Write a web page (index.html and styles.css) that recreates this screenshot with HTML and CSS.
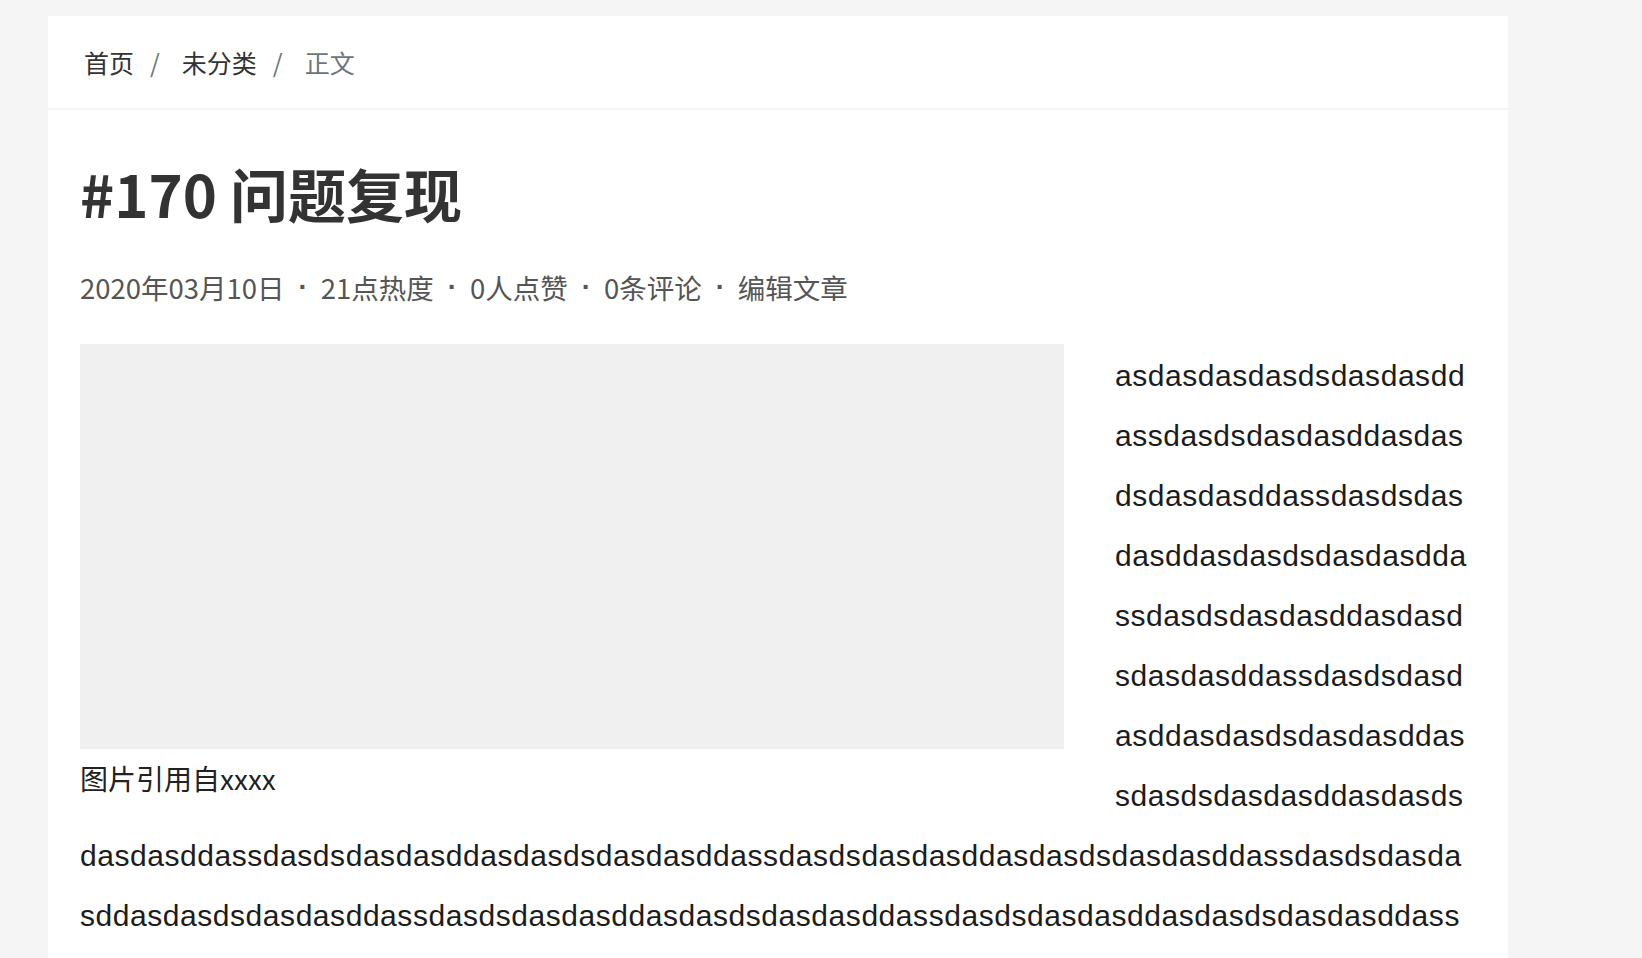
FILE: index.html
```html
<!DOCTYPE html>
<html lang="zh-CN">
<head>
    <meta charset="UTF-8">
    <meta name="viewport" content="width=device-width, initial-scale=1.0">
    <title>#170 问题复现</title>
    <link rel="stylesheet" href="styles.css">
</head>
<body>
    <div class="post-card">
        <nav class="crumbs">
            <a href="#">首页</a><span class="sep">/</span><a href="#">未分类</a><span class="sep">/</span><span class="current">正文</span>
        </nav>

        <article class="post">
            <h1 class="post-title">#170 问题复现</h1>

            <div class="post-meta">
                <span>2020年03月10日</span><span class="dot">·</span><span>21点热度</span><span class="dot">·</span><span>0人点赞</span><span class="dot">·</span><span>0条评论</span><span class="dot">·</span><a href="#">编辑文章</a>
            </div>

            <div class="post-body">
                <figure class="pic">
                    <div class="pic-box"></div>
                    <figcaption>图片引用自xxxx</figcaption>
                </figure>
                <p>asdasdasdasdsdasdasddassdasdsdasdasddasdasdsdasdasddassdasdsdasdasddasdasdsdasdasddassdasdsdasdasddasdasdsdasdasddassdasdsdasdasddasdasdsdasdasddassdasdsdasdasddasdasdsdasdasddassdasdsdasdasddasdasdsdasdasddassdasdsdasdasddasdasdsdasdasddassdasdsdasdasddasdasdsdasdasddassdasdsdasdasddasdasdsdasdasddassdasdsdasdasddasdasdsdasdasddassdasdsdasdasddasdasdsdasdasddass</p>
            </div>
        </article>
    </div>
</body>
</html>
```

FILE: styles.css
```css
body {
    margin: 0;
    padding-top: 16px;
    background: #f5f5f5;
    font-family: "Noto Sans CJK SC", "Liberation Sans", sans-serif;
    color: #333;
}
a {
    color: inherit;
    text-decoration: none;
}
.post-card {
    width: 1460px;
    margin-left: 48px;
    background: #fff;
    min-height: 1000px;
}
.crumbs {
    height: 92px;
    padding: 0 36px;
    display: flex;
    align-items: center;
    font-size: 25px;
    color: #333;
    border-bottom: 2px solid #f5f5f5;
}
.crumbs .sep {
    margin: 0 22px 0 16px;
    color: #6c757d;
}
.crumbs .current {
    color: #6c757d;
}
.post {
    padding: 0 38px 0 32px;
}
.post-title {
    margin: 48px 0 0;
    font-size: 58px;
    line-height: 70px;
    font-weight: 700;
    color: #333;
}
.post-meta {
    display: flex;
    align-items: center;
    height: 40px;
    margin-top: 39px;
    font-size: 27.5px;
    line-height: 40px;
    color: #555;
}
.post-meta .dot {
    margin: 0 13px 0 14px;
    font-family: "Liberation Sans", sans-serif;
    font-weight: 700;
}
.post-body {
    margin-top: 37px;
}
.pic {
    float: left;
    width: 984px;
    margin: 0 51px 0 0;
}
.pic-box {
    height: 405px;
    background: #f0f0f0;
}
.pic figcaption {
    font-size: 28px;
    line-height: 58px;
    color: #222;
}
.post-body p {
    margin: 0;
    padding-top: 2px;
    font-family: "Liberation Sans", "Noto Sans CJK SC", sans-serif;
    font-size: 30px;
    line-height: 60px;
    letter-spacing: 0.55px;
    word-break: break-all;
    color: #1c1c1c;
}
```
